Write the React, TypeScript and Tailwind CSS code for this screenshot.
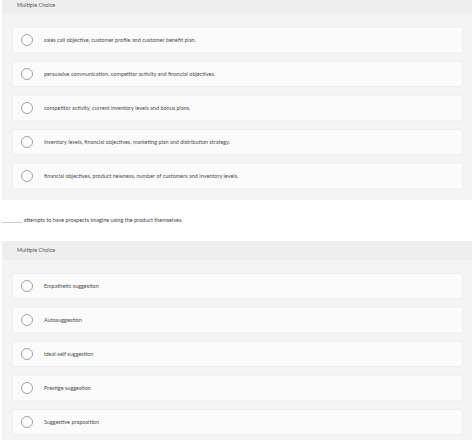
import React from "react";

const first = [
  "sales call objective, customer profile and customer benefit plan.",
  "persuasive communication, competitor activity and financial objectives.",
  "competitor activity, current inventory levels and bonus plans.",
  "inventory levels, financial objectives, marketing plan and distribution strategy.",
  "financial objectives, product newness, number of customers and inventory levels.",
];

const second = [
  "Empathetic suggestion",
  "Autosuggestion",
  "Ideal-self suggestion",
  "Prestige suggestion",
  "Suggestive proposition",
];

function Option({ label }: { label: string }) {
  return (
    <div className="h-[26px] flex items-center bg-[#fbfbfb] border border-[#f0f0f0] rounded-[2px] pl-[8px]">
      <div className="w-[12px] h-[12px] rounded-full border border-[#a0a0a0] bg-white shrink-0" />
      <span className="ml-[11px] text-[5.5px] leading-[7px] text-[#4d4d4d]">{label}</span>
    </div>
  );
}

function Panel({ options, headerH, top }: { options: string[]; headerH: string; top: string }) {
  return (
    <div className="mx-[2px] bg-[#f4f4f4]">
      <div className={`${headerH} ${top} bg-[#eeeeee] pl-[15px] flex text-[5.5px] leading-[7px] text-[#555]`}>
        Multiple Choice
      </div>
      <div className="flex flex-col gap-[8px] px-[10px] pt-[13px] pb-[11px] mr-[-1px]">
        {options.map((o) => (
          <Option key={o} label={o} />
        ))}
      </div>
    </div>
  );
}

export default function App() {
  return (
    <div
      className="w-[474px] h-[440px] bg-white overflow-hidden"
      style={{ fontFamily: "Lato, 'Noto Sans', sans-serif" }}
    >
      <Panel options={first} headerH="h-[14px]" top="pt-[2px]" />
      <div className="h-[41px] flex items-center pl-[2px] text-[5.5px] leading-[7px] text-[#444]">
        ________ attempts to have prospects imagine using the product themselves.
      </div>
      <Panel options={second} headerH="h-[19px]" top="pt-[6px]" />
    </div>
  );
}
